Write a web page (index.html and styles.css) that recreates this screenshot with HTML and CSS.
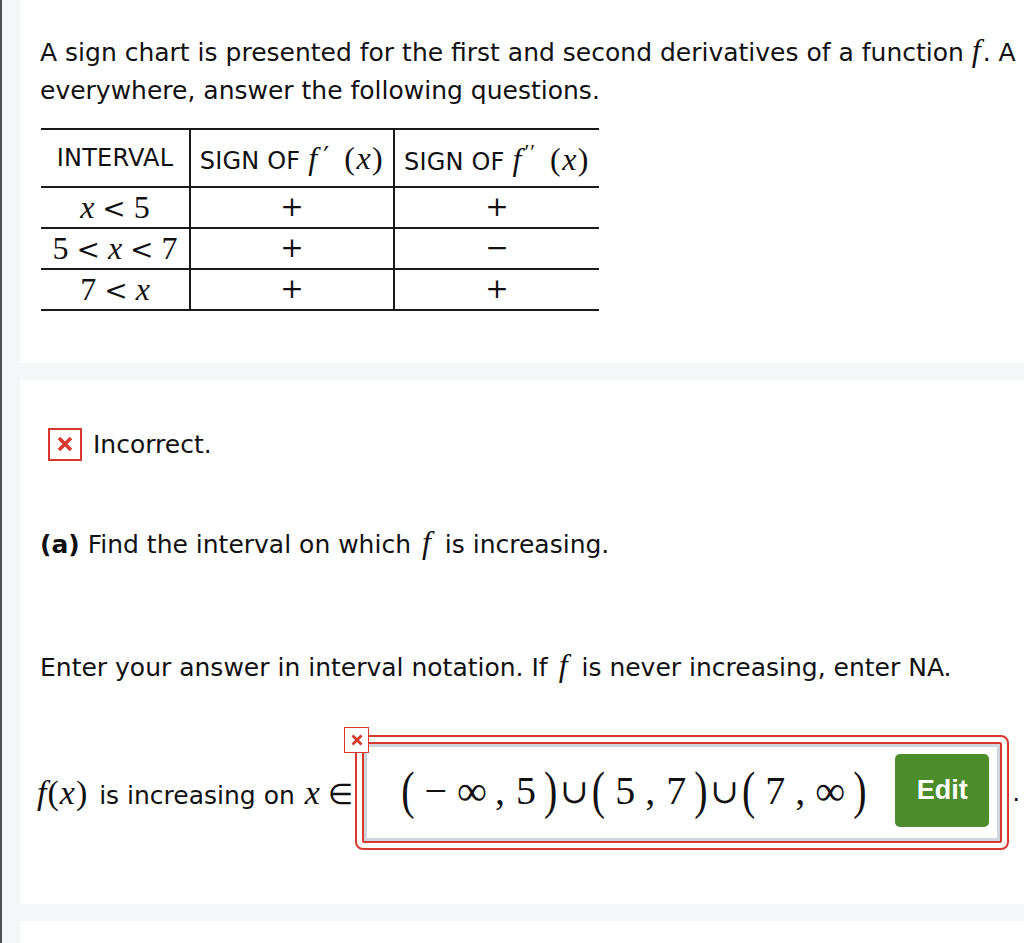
FILE: index.html
```html
<!DOCTYPE html>
<html lang="en">
<head>
<meta charset="utf-8">
<title>Sign chart question</title>
<link rel="stylesheet" href="styles.css">
</head>
<body>
<div class="page">
  <section class="panel p1">
    <p class="intro">A sign chart is presented for the first and second derivatives of a function <i class="m">f</i>. A<br>everywhere, answer the following questions.</p>
    <table class="chart">
      <thead>
        <tr>
          <th class="c1">INTERVAL</th>
          <th class="c2">SIGN OF <i class="m hf">f</i><span class="pr">′</span> <span class="hm">(<i>x</i>)</span></th>
          <th class="c3">SIGN OF <i class="m hf">f</i><span class="pr pp">′′</span> <span class="hm">(<i>x</i>)</span></th>
        </tr>
      </thead>
      <tbody>
        <tr><td><span class="mt"><i>x</i><span class="rel">&lt;</span>5</span></td><td><span class="sg">+</span></td><td><span class="sg">+</span></td></tr>
        <tr><td><span class="mt">5<span class="rel">&lt;</span><i>x</i><span class="rel">&lt;</span>7</span></td><td><span class="sg">+</span></td><td><span class="sg">−</span></td></tr>
        <tr><td><span class="mt">7<span class="rel">&lt;</span><i>x</i></span></td><td><span class="sg">+</span></td><td><span class="sg">+</span></td></tr>
      </tbody>
    </table>
  </section>

  <section class="panel p2">
    <div class="status">
      <span class="xbox"><svg viewBox="0 0 16 16" width="16" height="16"><path d="M2 2L14 14M14 2L2 14" stroke="#d8392e" stroke-width="3.6" fill="none"/></svg></span>
      <span>Incorrect.</span>
    </div>
    <p class="q"><b>(a)</b> Find the interval on which <i class="m sp">f</i> is increasing.</p>
    <p class="hint">Enter your answer in interval notation. If <i class="m sp">f</i> is never increasing, enter NA.</p>
    <div class="answer-row">
      <span class="lead"><span class="lm"><i>f</i>(<i>x</i>)</span> is increasing on <span class="lm lx"><i>x</i></span><span class="in">∈</span></span>
      <div class="ans-outer">
        <span class="badge"><svg viewBox="0 0 12 12" width="12" height="12"><path d="M1.5 1.5L10.5 10.5M10.5 1.5L1.5 10.5" stroke="#d8392e" stroke-width="2.8" fill="none"/></svg></span>
        <div class="ans-inner">
          <div class="ans-field">
            <span class="expr"><span class="pa">(</span><span class="t mn">−</span><span class="inf">∞</span><span class="t cm">,</span><span class="t">5</span><span class="pa">)</span><span class="cup">∪</span><span class="pa">(</span><span class="t">5</span><span class="t cm">,</span><span class="t">7</span><span class="pa">)</span><span class="cup">∪</span><span class="pa">(</span><span class="t">7</span><span class="t cm">,</span><span class="inf">∞</span><span class="pa">)</span></span>
            <button class="edit" type="button">Edit</button>
          </div>
        </div>
      </div>
      <span class="dot">.</span>
    </div>
  </section>

  <section class="panel p3"></section>
</div>
</body>
</html>
```

FILE: styles.css
```css
html, body {
  margin: 0;
  padding: 0;
}
body {
  background: #f5f6f8;
  border-left: 2px solid #505050;
  font-family: "DejaVu Sans", Verdana, sans-serif;
  font-size: 25px;
  color: #111;
  height: 943px;
  box-sizing: border-box;
  overflow: hidden;
}
.page {
  padding-left: 18px;
  display: flex;
  flex-direction: column;
  gap: 17px;
}
.panel {
  background: #fff;
  padding: 0 20px;
}
.p1 {
  padding-top: 34px;
  padding-bottom: 52px;
}
.p2 {
  padding-top: 47px;
  padding-bottom: 54px;
}
.p3 {
  height: 40px;
}
p {
  margin: 0;
  line-height: 38px;
}
.intro {
  white-space: nowrap;
}
.m, .hm, .mt, .lm, .pr {
  font-family: "Liberation Serif", "DejaVu Serif", serif;
  line-height: 1;
}
.m {
  font-size: 32px;
  font-style: italic;
  padding-right: 2px;
}
.m.sp {
  margin: 0 4px 0 3px;
}

/* sign chart */
.chart {
  margin: 18px 0 0 1px;
  border-collapse: separate;
  border-spacing: 0;
  border-top: 2px solid #1a1a1a;
  table-layout: fixed;
  width: 558px;
}
.chart th, .chart td {
  padding: 0;
  text-align: center;
  vertical-align: middle;
  border-bottom: 2px solid #1a1a1a;
  white-space: nowrap;
}
.chart th + th, .chart td + td {
  border-left: 2px solid #1a1a1a;
}
.chart th {
  font-weight: normal;
  font-size: 24px;
  height: 56px;
  letter-spacing: 0.2px;
}
.chart td {
  height: 39px;
}
.c1 { width: 148px; }
.c2 { width: 202px; }
.c3 { width: 204px; }
.hf {
  font-size: 32px;
  padding-right: 0;
}
.pr {
  font-family: "DejaVu Serif", serif;
  font-size: 26px;
  padding: 0 3px 0 6px;
  vertical-align: 4px;
}
.pp {
  font-family: "Liberation Serif", serif;
  font-size: 22px;
  vertical-align: 11px;
  letter-spacing: 1px;
  padding: 0 2px 0 3px;
}
.hm {
  font-size: 32px;
  letter-spacing: 1.5px;
  margin-left: 4px;
}
.mt {
  font-size: 32px;
}
.rel {
  font-family: "DejaVu Serif", serif;
  font-size: 28px;
  margin: 0 8px;
}
.sg {
  font-family: "DejaVu Serif", serif;
  font-size: 28px;
  line-height: 1;
}

/* feedback */
.status {
  display: flex;
  align-items: center;
  gap: 11px;
  margin-left: 8px;
  height: 34px;
}
.xbox {
  width: 30px;
  height: 29px;
  border: 2px solid #d8392e;
  display: flex;
  align-items: center;
  justify-content: center;
}
.q {
  margin-top: 65px;
}
.hint {
  margin-top: 85px;
}

/* answer */
.answer-row {
  margin-top: 48px;
  display: flex;
  align-items: center;
}
.lead {
  white-space: nowrap;
  margin-right: 2px;
}
.lm {
  font-size: 34px;
  letter-spacing: 1px;
  margin-left: -3px;
  margin-right: 3px;
}
.lx {
  margin: 0 7px 0 2px;
}
.in {
  font-family: "DejaVu Sans", sans-serif;
  font-size: 29px;
  line-height: 1;
}
.ans-outer {
  position: relative;
  width: 654px;
  box-sizing: border-box;
  border: 2px solid #d8392e;
  border-radius: 8px;
  padding: 5px;
  flex: none;
}
.badge {
  position: absolute;
  left: -13px;
  top: -10px;
  width: 23px;
  height: 24px;
  background: #fff;
  border: 1px solid #d8392e;
  display: flex;
  align-items: center;
  justify-content: center;
}
.ans-inner {
  border: 2px solid #d8392e;
  border-radius: 2px;
}
.ans-field {
  display: flex;
  align-items: center;
  border: 3px solid #cfd5dc;
  padding: 7px 8px 11px 34px;
  background: #fff;
}
.expr {
  font-family: "Liberation Serif", "DejaVu Serif", serif;
  font-size: 40px;
  line-height: 1;
  display: flex;
  align-items: center;
  white-space: nowrap;
}
.expr .pa {
  display: inline-block;
  transform: scaleY(1.3);
}
.expr .t {
  margin-left: 11px;
}
.expr .t.mn {
  margin-right: 0;
}
.expr .inf {
  font-size: 42px;
  line-height: 40px;
  margin-left: 10px;
}
.expr .t.cm {
  margin-left: 10px;
}
.expr .pa + .t {
  margin-left: 10px;
}
.expr .t + .pa, .expr .inf + .pa {
  margin-left: 8px;
}
.expr .inf + .t.cm {
  margin-left: 8px;
}
.expr .cup {
  font-family: "DejaVu Serif", serif;
  font-size: 34px;
  margin: 0 3px;
}
.edit {
  margin-left: auto;
  width: 94px;
  height: 73px;
  background: #4c8c2b;
  border: none;
  border-radius: 5px;
  color: #fff;
  font-family: "Liberation Sans", Arial, sans-serif;
  font-weight: bold;
  font-size: 27px;
  padding: 0;
}
.dot {
  margin-left: 3px;
}
```
